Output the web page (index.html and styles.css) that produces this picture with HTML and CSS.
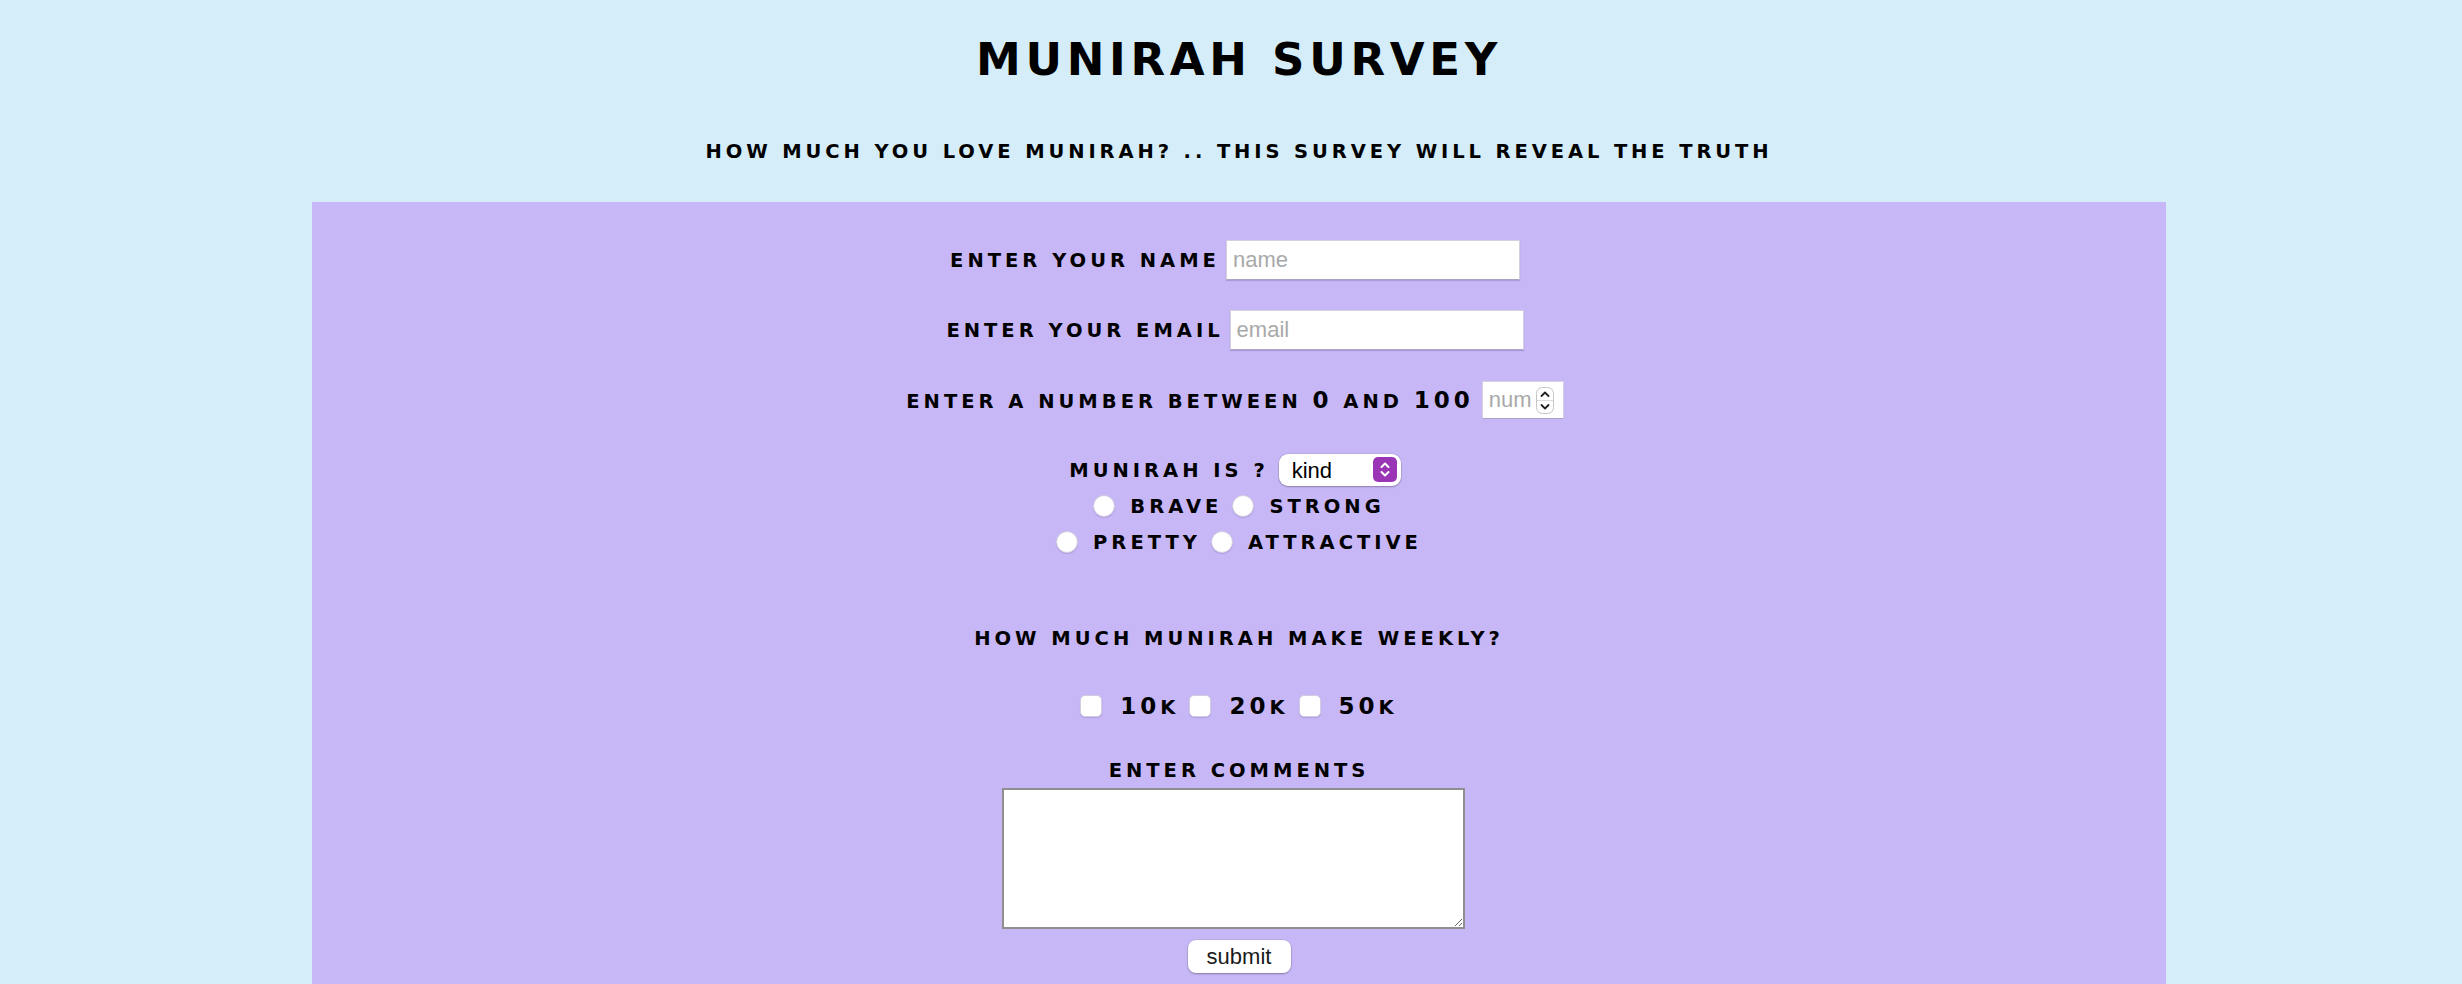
FILE: index.html
```html
<!DOCTYPE html>
<html lang="en">
<head>
    <meta charset="UTF-8">
    <meta name="viewport" content="width=device-width, initial-scale=1.0">
    <title>Munirah Survey</title>
    <link rel="stylesheet" href="styles.css">
</head>
<body>
    <h1 class="title">munirah survey</h1>
    <h4 class="subtitle">how much you love munirah? .. this survey will reveal the truth</h4>

    <form class="survey">
        <div class="field field-first">
            <label for="name">enter your name</label>
            <input id="name" class="text-input" type="text" placeholder="name">
        </div>
        <div class="field">
            <label for="email">enter your email</label>
            <input id="email" class="text-input" type="email" placeholder="email">
        </div>
        <div class="field">
            <label for="num">enter a number between <span class="digits">0</span> and <span class="digits">100</span></label>
            <div class="number-wrap">
                <input id="num" class="number-input" type="number" min="0" max="100" placeholder="num">
                <span class="spinner">
                    <svg width="18" height="27" viewBox="0 0 18 27">
                        <rect x="0.5" y="0.5" width="17" height="26" rx="6" fill="#fff" stroke="#c4c4c4"/>
                        <line x1="1" y1="13.5" x2="17" y2="13.5" stroke="#dcdcdc"/>
                        <path d="M5.5 9 L9 5.5 L12.5 9 M5.5 18 L9 21.5 L12.5 18" fill="none" stroke="#222" stroke-width="1.8" stroke-linecap="round" stroke-linejoin="round"/>
                    </svg>
                </span>
            </div>
        </div>

        <div class="row row-select">
            <label for="trait">munirah is ?</label>
            <div class="select-wrap">
                <select id="trait" class="select">
                    <option>kind</option>
                    <option>smart</option>
                    <option>funny</option>
                </select>
                <span class="select-arrow">
                    <svg width="24" height="25" viewBox="0 0 24 25">
                        <rect width="24" height="25" rx="5" fill="#9a36b6"/>
                        <path d="M8.5 10 L12 6.5 L15.5 10 M8.5 15 L12 18.5 L15.5 15" fill="none" stroke="#fff" stroke-width="2" stroke-linecap="round" stroke-linejoin="round"/>
                    </svg>
                </span>
            </div>
        </div>
        <div class="row">
            <input id="brave" class="radio" type="radio" name="trait2">
            <label for="brave" class="option">brave</label>
            <input id="strong" class="radio" type="radio" name="trait2">
            <label for="strong" class="option">strong</label>
        </div>
        <div class="row">
            <input id="pretty" class="radio" type="radio" name="trait2">
            <label for="pretty" class="option">pretty</label>
            <input id="attractive" class="radio" type="radio" name="trait2">
            <label for="attractive" class="option">attractive</label>
        </div>

        <p class="row question">how much munirah make weekly?</p>
        <div class="row row-checks">
            <input id="k10" class="check" type="checkbox">
            <label for="k10" class="option"><span class="digits">10</span>k</label>
            <input id="k20" class="check" type="checkbox">
            <label for="k20" class="option"><span class="digits">20</span>k</label>
            <input id="k50" class="check" type="checkbox">
            <label for="k50" class="option"><span class="digits">50</span>k</label>
        </div>

        <label for="comments" class="row comments-label">enter comments</label>
        <textarea id="comments" class="comments"></textarea>
        <button type="submit" class="submit">submit</button>
    </form>
</body>
</html>
```

FILE: styles.css
```css
body {
    margin: 0;
    padding-left: 16px;
    background-color: #d4edf8;
    font-family: "DejaVu Sans", sans-serif;
    font-weight: bold;
    text-transform: uppercase;
    color: #000;
}

.title {
    margin: 0;
    text-align: center;
    font-size: 45px;
    line-height: 120px;
    letter-spacing: 4.7px;
}

.subtitle {
    margin: 12px 0 30px;
    text-align: center;
    font-size: 19.5px;
    line-height: 40px;
    letter-spacing: 3.9px;
}

.survey {
    width: 1854px;
    margin-left: 296px;
    padding: 36px 0 60px;
    background-color: #c8b7f7;
    display: flex;
    flex-direction: column;
    align-items: center;
    font-size: 19.5px;
    letter-spacing: 4px;
}

.digits {
    font-size: 23px;
}

.field {
    display: flex;
    align-items: center;
    gap: 6px;
    height: 44px;
    margin-top: 26px;
    margin-right: 8px;
}

.field-first {
    margin-top: 0;
}

.text-input,
.number-input,
.select,
.submit,
.comments {
    font-family: "Liberation Sans", Arial, sans-serif;
    font-weight: normal;
    text-transform: none;
    letter-spacing: 0;
}

.text-input {
    box-sizing: border-box;
    width: 294px;
    height: 40px;
    padding: 0 6px;
    font-size: 22px;
    background: #fff;
    border: 1px solid #d4d0e0;
    border-bottom-color: #aaa3c6;
    box-shadow: 0 1px 1px rgba(90, 70, 150, 0.25);
    outline: none;
}

::placeholder {
    color: #a9a9a9;
}

.number-wrap {
    position: relative;
    margin-left: 2px;
}

.number-input {
    box-sizing: border-box;
    width: 82px;
    height: 38px;
    padding: 0 30px 0 6px;
    font-size: 22px;
    background: #fff;
    border: 1px solid #d4d0e0;
    border-bottom-color: #aaa3c6;
    outline: none;
    -moz-appearance: textfield;
}

.number-input::-webkit-inner-spin-button,
.number-input::-webkit-outer-spin-button {
    -webkit-appearance: none;
    margin: 0;
}

.spinner {
    position: absolute;
    right: 10px;
    top: 6px;
    height: 27px;
    pointer-events: none;
}

.spinner svg,
.select-arrow svg {
    display: block;
}

.row {
    display: flex;
    align-items: center;
    justify-content: center;
    height: 36px;
    margin: 0;
}

.row-select {
    margin-top: 30px;
    margin-right: 8px;
    gap: 10px;
}

.select-wrap {
    position: relative;
}

.select {
    -webkit-appearance: none;
    appearance: none;
    display: block;
    width: 122px;
    height: 32px;
    padding: 0 0 0 13px;
    font-size: 22px;
    color: #000;
    background: #fff;
    border: none;
    border-radius: 9px;
    box-shadow: 0 1px 2px rgba(0, 0, 0, 0.25), 0 0 0 0.5px rgba(0, 0, 0, 0.12);
    outline: none;
}

.select-arrow {
    position: absolute;
    right: 4px;
    top: 3px;
    pointer-events: none;
}

.radio,
.check {
    -webkit-appearance: none;
    appearance: none;
    width: 22px;
    height: 22px;
    margin: 0 15px 0 0;
    background: #fff;
    border: 1px solid #d2cde0;
    box-shadow: 0 1px 1px rgba(80, 60, 140, 0.2);
}

.radio {
    border-radius: 50%;
}

.check {
    border-radius: 5px;
    margin-right: 18px;
}

.option {
    margin-right: 10px;
}

.option:last-child {
    margin-right: 0;
}

.question {
    margin-top: 60px;
}

.row-checks {
    margin-top: 32px;
}

.comments-label {
    margin-top: 28px;
}

.comments {
    box-sizing: border-box;
    width: 463px;
    height: 141px;
    border: 2px solid #8f8f8f;
    background: #fff;
    margin: 0 11px 0 0;
}

.submit {
    width: 103px;
    height: 33px;
    margin-top: 11px;
    padding: 0;
    font-size: 22px;
    color: #1a1a1a;
    background: #fff;
    border: none;
    border-radius: 8px;
    box-shadow: 0 1px 2px rgba(0, 0, 0, 0.3), 0 0 0 0.5px rgba(0, 0, 0, 0.1);
}
```
